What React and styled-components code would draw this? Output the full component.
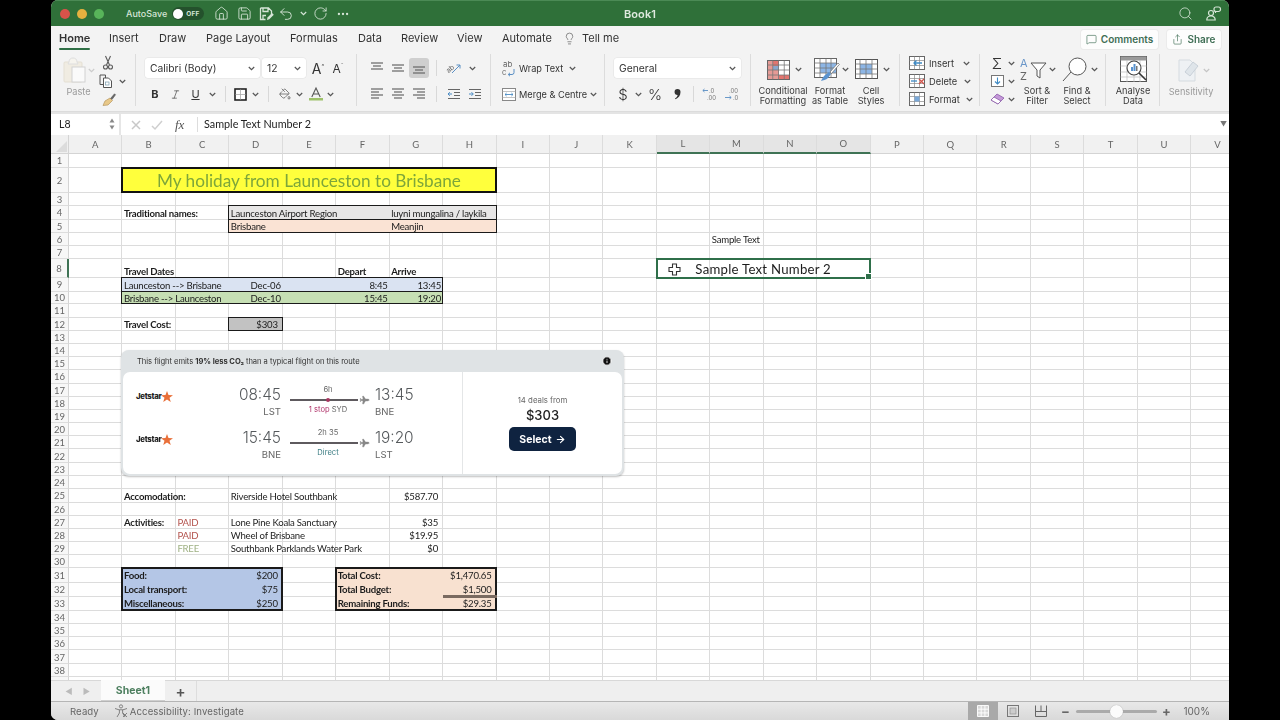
import React from "react";
import styled, { createGlobalStyle, css } from "styled-components";
import { House, Save, Undo2, RotateCw, Ellipsis, Search, Lightbulb, MessageSquare, Share, PaintBucket, Info, Plane, ArrowRight, Italic } from "lucide-react";

const Global = createGlobalStyle`
  html, body { margin: 0; padding: 0; background: #000; }
  body { font-family: "Inter", "Liberation Sans", sans-serif; overflow: hidden; }
  * { box-sizing: border-box; }
`;

const Stage = styled.div`
  width: 1280px; height: 720px; background: #000; display: flex; justify-content: center;
`;
const Window = styled.div`
  width: 1178px; height: 720px; display: flex; flex-direction: column; overflow: hidden;
  background: #f2f2f2; border-radius: 7px 7px 0 7px; filter: blur(0.3px);
`;

/* ---------- title bar ---------- */
const TitleBar = styled.header`
  height: 26px; flex: none; background: #2f7039; color: #e8f0e8;
  display: grid; grid-template-columns: 1fr auto 1fr; align-items: center;
  border-top: 1px solid #4b8a55;
`;
const TitleLeft = styled.div`display: flex; align-items: center; padding-left: 9px;`;
const TitleRight = styled.div`display: flex; align-items: center; justify-content: flex-end; gap: 12px; padding-right: 8px;`;
const Light = styled.span`
  width: 10px; height: 10px; border-radius: 50%; background: ${p => p.$c}; margin-right: 7px;
`;
const AutoSave = styled.span`font-size: 9px; font-weight: 500; color: #d5e4d6; margin-left: 15px; white-space: nowrap;`;
const Toggle = styled.span`
  width: 32px; height: 13px; border-radius: 7px; background: #24512c; margin-left: 5px;
  display: flex; align-items: center; padding-left: 1px; gap: 3px;
  font-size: 6.5px; font-weight: 700; color: #d5e4d6; letter-spacing: .2px;
`;
const Knob = styled.span`width: 10px; height: 10px; border-radius: 50%; background: #fff;`;
const TitleIcon = styled.span`
  display: flex; width: ${p => p.$w || 16}px; justify-content: center; margin-left: ${p => p.$ml || 0}px; color: #d6e5d7;
`;
const TitleText = styled.div`font-size: 11px; font-weight: 600; color: #dfeadf; letter-spacing: .1px;`;

/* ---------- tabs ---------- */
const TabRow = styled.nav`
  height: 26px; flex: none; display: flex; align-items: center; padding: 0 8px 2px; background: #f3f3f3;
`;
const Tab = styled.span`
  position: relative; font-size: 11px; color: #333; white-space: nowrap; width: ${p => p.$w}px; margin-right: ${p => p.$mr}px;
  font-weight: ${p => (p.$active ? 600 : 400)};
  ${p => p.$active && css`
    &::after { content: ""; position: absolute; left: 0; right: 0; bottom: -5px; height: 2px; background: #2f6f45; border-radius: 1px; }
  `}
`;
const TellIcon = styled.span`display: flex; margin-right: 6px; margin-left: -3px; color: #555;`;
const TabActions = styled.div`margin-left: auto; margin-top: 2px; display: flex; gap: 9px;`;
const PillButton = styled.span`
  height: 19px; width: ${p => p.$w}px; background: #fdfdfd; border-radius: 3px; display: flex; align-items: center; justify-content: center;
  gap: 4px; font-size: 10px; font-weight: 600; color: #3f6e55; box-shadow: 0 0 0 1px #ebebeb;
`;

/* ---------- ribbon ---------- */
const Ribbon = styled.section`
  height: 60px; flex: none; display: flex; background: #f3f3f3; border-bottom: 1px solid #dcdcdc; padding-top: 2px;
`;
const Group = styled.div`
  width: ${p => p.$w}px; height: 52px; flex: none; padding-left: ${p => p.$pl || 0}px;
  display: flex; gap: ${p => p.$gap || 0}px;
  border-right: ${p => (p.$last ? "none" : "1px solid #dcdcdc")};
`;
const TwoRows = styled.div`
  display: flex; flex-direction: column; gap: 6px; padding-top: 4px;
`;
const ThreeRows = styled.div`display: flex; flex-direction: column; flex: ${p => (p.$fixed ? "none" : "initial")}; width: ${p => (p.$fixed ? `${p.$fixed}px` : "auto")};`;
const ToolRow = styled.div`display: flex; align-items: center; height: 20px; gap: ${p => p.$gap || 0}px;`;
const ListRow = styled.div`display: flex; align-items: center; height: 18px; gap: ${p => p.$gap || 0}px; font-size: 9.3px; color: #333;`;
const Slot = styled.span`
  display: flex; align-items: center; justify-content: center; height: 20px; flex: none;
  width: ${p => p.$w || 20}px; margin-left: ${p => p.$ml || 0}px; color: #444;
  ${p => p.$active && css`background: #cfcfcf; border-radius: 3px;`}
`;
const ListSlot = styled(Slot)`height: 18px;`;
const Letter = styled.span`font-size: ${p => p.$s || 11}px; font-weight: ${p => p.$wt || 400}; color: #333; text-decoration: ${p => p.$u ? "underline" : "none"};`;
const Caret = styled.sup`font-size: 6px;`;
const ToolSep = styled.span`width: 1px; height: 16px; background: #d8d8d8; margin: 0 ${p => p.$m || 7}px; flex: none;`;
const SelectBox = styled.span`
  width: ${p => p.$w}px; height: 20px; flex: none; background: #fff; border-radius: 3px; box-shadow: 0 0 0 .5px #e2e2e2;
  display: flex; align-items: center; justify-content: space-between; padding: 0 5px; font-size: 10.3px; color: #333;
`;
const WrapLabel = styled.span`font-size: 9.2px; color: #333; white-space: nowrap; margin-left: 2px;`;
const BigButton = styled.div`
  width: ${p => p.$w}px; margin-left: ${p => p.$ml || 0}px; flex: none; display: flex; flex-direction: column; align-items: stretch; color: #333;
`;
const BigIcon = styled.div`
  height: 33px; display: flex; align-items: center; padding-left: ${p => p.$pl || 0}px; padding-bottom: 1px;
  justify-content: ${p => (p.$center ? "center" : "flex-start")};
`;
const BigLabel = styled.div`
  font-size: 9.2px; line-height: 10px; text-align: center; white-space: nowrap; color: ${p => p.$muted ? "#9a9a9a" : "#3a3a3a"};
`;

/* ---------- formula bar ---------- */
const FormulaBar = styled.section`
  height: 23px; flex: none; display: flex; align-items: center; background: #fff; border-top: 2px solid #e4e4e4;
  font-size: 10.2px; color: #222;
`;
const NameBox = styled.div`
  width: 70px; height: 100%; display: flex; align-items: center; justify-content: space-between; padding: 0 3px 1px 8px; border-right: 2px solid #e6e6e6; font-family: "Lato", sans-serif; font-size: 10.5px;
`;
const FormulaIcons = styled.div`display: flex; align-items: center; width: 76px; gap: 9px; padding-left: 9px; height: 100%; color: #bbb;`;
const FxLabel = styled.span`font-family: "Liberation Serif", serif; font-style: italic; font-size: 13px; color: #555; margin-left: 3px;`;
const FormulaSep = styled.span`width: 1px; height: 15px; background: #ddd;`;
const FormulaText = styled.div`flex: 1; padding: 0 0 2px 6px; font-family: "Lato", sans-serif; font-size: 10.8px; color: #222;`;
const FormulaCaret = styled.span`padding-right: 2px; color: #777; font-size: 7px;`;

/* ---------- sheet ---------- */
const rowHeights = [19, 13.5, 25.5, 13.3, 13.4, 13, 13, 13, 19.6, 13.4, 12.6, 13.4, 13.3, 13,
  13.2, 13.2, 13.2, 13.2, 13.2, 13.2, 13.2, 13.2, 13.2, 13.2, 13.3,
  13.4, 13.3, 13, 13, 13, 13.3, 14.4, 14, 14, 13.3, 13, 13.7, 13.3, 13.3, 13];
const colLetters = "ABCDEFGHIJKLMNOPQRSTUV".split("");
const sheetGrid = css`
  display: grid;
  grid-template-columns: 18px repeat(22, 53.45px);
  grid-template-rows: ${rowHeights.map(h => `${h}px`).join(" ")};
`;
const Sheet = styled.section`
  position: relative; flex: none; height: 545px; overflow: hidden; background: #fff;
`;
const BaseGrid = styled.div`${sheetGrid}`;
const OverlayGrid = styled.div`${sheetGrid} position: absolute; left: 0; top: 0;`;
const Corner = styled.div`
  background: #f0f0f0; border-right: 1px solid #d4d4d4; border-bottom: 1px solid #d4d4d4; position: relative;
  &::after { content: ""; position: absolute; right: 1px; bottom: 1px; border-style: solid; border-width: 0 0 11px 11px; border-color: transparent transparent #dcdcdc transparent; }
`;
const ColHead = styled.div`
  display: flex; align-items: center; justify-content: center; font-family: "Lato", sans-serif; font-size: 9.5px; color: #666;
  background: ${p => (p.$sel ? "#e5e5e5" : "#f1f1f1")}; border-right: 1px solid #dcdcdc;
  border-bottom: ${p => (p.$sel ? "2px solid #3f7355" : "1px solid #d4d4d4")};
`;
const RowHead = styled.div`
  display: flex; align-items: center; justify-content: center; font-family: "Lato", sans-serif; font-size: 9.5px; color: #666; padding-top: 1px;
  background: #f7f7f7; border-bottom: 1px solid #dcdcdc;
  border-right: ${p => (p.$sel ? "2px solid #3f7355" : "1px solid #d4d4d4")};
`;
const GridCell = styled.div`border-right: 1px solid #dcdcdc; border-bottom: 1px solid #dcdcdc;`;

const placed = css`
  grid-row: ${p => p.$r + 1} / span ${p => p.$rs || 1};
  grid-column: ${p => p.$c + 1} / span ${p => p.$cs || 1};
`;
const Fill = styled.div`
  ${placed} background: ${p => p.$bg}; border: ${p => p.$b || 1}px solid #1a1a1a; margin: -1px 0 0 -1px;
`;
const TitleCell = styled.div`
  ${placed} background: #ffff3c; border: 2px solid #111; margin: -1px 0 0 -1px; display: flex; align-items: center; justify-content: center;
  font-family: "Lato", sans-serif; font-size: 17.2px; color: #7da63a; padding-top: 1px;
`;
const Label = styled.div`
  ${placed} display: flex; align-items: ${p => (p.$bottom ? "flex-end" : "center")};
  justify-content: ${p => (p.$right ? "flex-end" : "flex-start")};
  padding: ${p => (p.$bottom ? 0 : 1)}px ${p => p.$pr || 2}px ${p => (p.$bottom ? 2 : 0)}px 1.5px;
  font-family: "Lato", sans-serif; font-size: 9.6px; white-space: nowrap; line-height: 1;
  letter-spacing: -.22px;
  font-weight: ${p => (p.$bold ? 700 : 400)}; color: ${p => p.$color || "#1c1c1c"};
`;
const Underbar = styled.div`${placed} align-self: end; height: 3px; margin-bottom: -1px; background: #7a6a60;`;
const Selection = styled.div`
  ${placed} position: relative; border: 2px solid #2f6f4a; margin: -1px 0 -1px -1px; display: flex; align-items: center; justify-content: center;
  font-family: "Lato", sans-serif; font-size: 13.2px; color: #1c1c1c; letter-spacing: .25px; padding-top: 1px;
  &::after { content: ""; position: absolute; right: -3px; bottom: -3px; width: 5px; height: 5px; background: #2f6f4a; border: 1px solid #fff; }
`;
const CursorMark = styled.svg`position: absolute; left: 617px; top: 128px;`;

/* ---------- flight card ---------- */
const Card = styled.article`
  position: absolute; left: 70px; top: 215px; width: 503px; height: 126px; background: #dfe3e5; border-radius: 8px; padding: 0 2px 2px;
  display: flex; flex-direction: column; box-shadow: 0 1px 2px rgba(0,0,0,.25);
`;
const CardNote = styled.div`
  height: 22px; flex: none; display: flex; align-items: center; justify-content: space-between; padding: 0 10px 0 14px;
  font-size: 7.6px; color: #333; letter-spacing: -.05px;
`;
const CardBody = styled.div`flex: 1; background: #fff; border-radius: 7px; display: grid; grid-template-columns: 340px 1fr;`;
const Flights = styled.div`display: flex; flex-direction: column; padding-top: 14px; border-right: 1px solid #e4e6e7;`;
const FlightRow = styled.div`height: 43px; display: flex; align-items: flex-start; padding-left: 13px;`;
const Brand = styled.div`
  width: 59px; display: flex; align-items: center; height: 20px; font-size: 7.8px; font-weight: 800; color: #222; letter-spacing: -.3px;
`;
const TimeBox = styled.div`
  width: ${p => p.$w}px; margin-left: ${p => p.$ml || 0}px; text-align: ${p => p.$align}; display: flex; flex-direction: column; gap: 3px;
`;
const Clock = styled.div`font-size: 15.4px; line-height: 17px; color: #55595c; font-weight: 300;`;
const Airport = styled.div`font-size: 9.6px; line-height: 12px; color: #666;`;
const Route = styled.div`
  width: 78px; margin: -1px 0 0 9px; display: flex; flex-direction: column; align-items: flex-start;
`;
const RouteTop = styled.div`width: 76px; height: 11px; text-align: center; font-size: 7.6px; line-height: 10px; color: #666;`;
const RouteLine = styled.div`display: flex; align-items: center; height: 8px;`;
const Track = styled.div`
  width: 68px; height: 1.6px; background: #5e5a5e; position: relative;
  ${p => p.$stop && css`&::after { content: ""; position: absolute; left: 36px; top: -1.2px; width: 4px; height: 4px; border-radius: 50%; background: #a6365f; }`}
`;
const RouteBottom = styled.div`width: 76px; text-align: center; font-size: 7.6px; line-height: 12px; color: ${p => p.$c || "#666"};`;
const Stop = styled.span`color: #b0336a;`;
const Deals = styled.div`display: flex; flex-direction: column; align-items: center; padding-top: 23px;`;
const DealsNote = styled.div`font-size: 7.8px; line-height: 10px; color: #666;`;
const Price = styled.div`font-size: 13px; line-height: 16px; margin-top: 2px; color: #222; font-weight: 500;`;
const SelectButton = styled.div`
  width: 67px; height: 24px; margin-top: 4px; background: #0f2340; border-radius: 5px; color: #fff; font-size: 10.5px; font-weight: 700;
  display: flex; align-items: center; justify-content: center; gap: 3px;
`;

/* ---------- bottom ---------- */
const SheetTabs = styled.section`
  height: 21px; flex: none; display: flex; align-items: stretch; background: #efefef; border-top: 1px solid #d8d8d8; padding-left: 11px; color: #aaa;
`;
const NavArrow = styled.span`display: flex; align-items: center; justify-content: center; width: ${p => p.$w}px; color: #bbb; font-size: 8px;`;
const SheetTab = styled.span`
  width: 64px; margin-left: 4px; margin-top: -1px; background: #fbfbfb; border-bottom: 1px solid #cfcfcf; display: flex; align-items: center; justify-content: center; font-size: 10.5px; font-weight: 700; color: #4d7f5f;
`;
const AddSheet = styled.span`
  width: 32px; display: flex; align-items: center; justify-content: center; font-size: 15px; font-weight: 600; color: #555; border-right: 1px solid #ddd;
`;
const StatusBar = styled.footer`
  flex: 1; display: flex; align-items: center; background: linear-gradient(#e8e8e8, #d9d9d9); border-top: 1px solid #b5b5b5; font-size: 9.6px; color: #666; padding-left: 19px;
`;
const StatusText = styled.span`margin-left: ${p => p.$ml || 0}px; white-space: nowrap; letter-spacing: .08px;`;
const StatusGroup = styled(StatusText)`display: flex; align-items: center; gap: 2px;`;
const StatusRight = styled.div`margin-left: auto; display: flex; align-items: center; height: 100%; padding-right: 19px;`;
const ViewButton = styled.span`
  width: ${p => p.$w}px; height: 100%; display: flex; align-items: center; justify-content: center;
  background: ${p => (p.$active ? "#a9a9a9" : "transparent")}; color: #666;
`;
const ZoomMark = styled.span`width: 10px; margin-left: ${p => p.$ml || 0}px; text-align: center; font-size: 13px; font-weight: 700; color: #666; line-height: 1;`;
const Slider = styled.span`width: 81px; height: 3px; background: #aaa; border-radius: 2px; margin-left: 6px; position: relative;`;
const SliderKnob = styled.span`position: absolute; left: 34px; top: -5px; width: 13px; height: 13px; border-radius: 50%; background: #fbfbfb; box-shadow: 0 0 1px #999;`;
const ZoomValue = styled.span`margin-left: 12px; font-size: 10px; color: #666;`;

/* ---------- icons ---------- */
const Chev = ({ c = "#555" }) => (
  <svg width="7" height="5" viewBox="0 0 7 5"><path d="M.8 1l2.7 2.7L6.2 1" fill="none" stroke={c} strokeWidth="1.2" /></svg>
);
const Ico = ({ w = 16, h = 16, children }) => (
  <svg width={w} height={h} viewBox={`0 0 ${w} ${h}`} style={{ display: "block", overflow: "visible" }}>{children}</svg>
);
const SaveEdit = () => (
  <Ico w={16} h={16}>
    <path d="M2.5 2h8l3 3v4M2.5 2v11.5h5M5 2v3.5h5V2M5 13v-3.5h3" fill="none" stroke="#d6e5d7" strokeWidth="1.3" />
    <path d="M9 14l.5-2.5 4.5-4.5 1.8 1.8-4.5 4.5z" fill="#d6e5d7" />
  </Ico>
);
const People = () => (
  <Ico w={17} h={17}>
    <g fill="none" stroke="#d6e5d7" strokeWidth="1.2">
      <circle cx="6" cy="8" r="2.5" /><path d="M1.8 15c0-2.8 1.8-4 4.2-4s4.2 1.2 4.2 4z" />
      <rect x="9" y="2" width="6.5" height="4.5" rx="2" /><path d="M10.5 6.5V8" />
    </g>
  </Ico>
);
const Paste = () => (
  <Ico w={23} h={26}>
    <rect x="1" y="5" width="18" height="20" rx="1" fill="#f0ece2" stroke="#e4dfd3" />
    <path d="M6 5c0-3 2-4 4-4s4 1 4 4l1 2H5z" fill="#f6f4ee" stroke="#dedede" />
    <rect x="9" y="10" width="13" height="15" fill="#fafafa" stroke="#d2d2d2" />
  </Ico>
);
const Cut = () => (
  <Ico w={10} h={14}>
    <g fill="none" stroke="#5a5a5a" strokeWidth="1.1">
      <path d="M2.5 0l4 9M7.5 0l-4 9" /><circle cx="2.5" cy="11" r="2" /><circle cx="7.5" cy="11" r="2" />
    </g>
  </Ico>
);
const CopyDocs = () => (
  <Ico w={13} h={14}>
    <path d="M1 1h5.5v3M1 1v9.5h3.5" fill="none" stroke="#555" strokeWidth="1" />
    <path d="M4.5 4h5l3 3v6.5h-8z" fill="#fff" stroke="#555" strokeWidth="1" /><rect x="6.5" y="8" width="3.5" height="3" fill="none" stroke="#79a" strokeWidth=".7" />
  </Ico>
);
const Brush = () => (
  <Ico w={14} h={13}>
    <path d="M8 5l2.5 2.5L6 12 1 12.5 3 8z" fill="#e8c888" stroke="#b69660" strokeWidth=".7" />
    <path d="M8.5 5.5L12.5.8l1 1L10 6.5" fill="#666" stroke="#555" strokeWidth=".6" />
  </Ico>
);
const Borders = () => (
  <Ico w={13} h={13}>
    <rect x="1" y="1" width="11" height="11" fill="#fff" stroke="#222" strokeWidth="1.6" />
    <path d="M6.5 1.5v10M1.5 6.5h10" stroke="#aaa" strokeWidth=".8" />
  </Ico>
);
const FontColor = () => (
  <Ico w={14} h={14}>
    <path d="M2.8 10L7 1l4.2 9M4.5 7h5" fill="none" stroke="#555" strokeWidth="1.1" />
    <rect x="0" y="11" width="14" height="2.5" fill="#9dc16a" />
  </Ico>
);
const Lines = ({ rows }) => (
  <Ico w={14} h={14}>
    {rows.map(([y, x1, x2], i) => (
      <path key={i} d={`M${x1} ${y}H${x2}`} stroke="#666" strokeWidth="1.2" />
    ))}
  </Ico>
);
const Orient = () => (
  <Ico w={14} h={13}>
    <text x="0" y="9" fontSize="7" fill="#666" transform="rotate(-40 4 8)" fontFamily="Inter">ab</text>
    <path d="M5 11L13 3M13 3H9.5M13 3v3.5" fill="none" stroke="#5a8fc4" strokeWidth="1" />
  </Ico>
);
const Indent = ({ flip }) => (
  <Ico w={14} h={12}>
    <path d="M1 1.5h12M1 10.5h12M7 4.5h6M7 7.5h6" stroke="#666" strokeWidth="1" />
    <path d={flip ? "M1 6h4M3.5 4.2L5.3 6 3.5 7.8" : "M5 6H1M2.8 4.2L1 6l1.8 1.8"} fill="none" stroke="#4a8bc4" strokeWidth="1" />
  </Ico>
);
const WrapIcon = () => (
  <Ico w={14} h={16}>
    <text x="1" y="7" fontSize="8" fill="#666" fontFamily="Inter">ab</text>
    <text x="0" y="15" fontSize="7.5" fill="#666" fontFamily="Inter">c</text>
    <path d="M12 9v3.5q0 2-2 2H6.5M8 12.8l-1.8 1.7 1.8 1.7" fill="none" stroke="#5a8fc4" strokeWidth="1" />
  </Ico>
);
const MergeIcon = () => (
  <Ico w={14} h={13}>
    <rect x=".5" y=".5" width="13" height="12" fill="#fff" stroke="#888" />
    <path d="M.5 3.5h13M.5 9.5h13" stroke="#aaa" strokeWidth=".7" />
    <path d="M3 6.5h8M4.6 5L3 6.5 4.6 8M9.4 5L11 6.5 9.4 8" fill="none" stroke="#4a8bc4" strokeWidth=".9" />
  </Ico>
);
const CommaIcon = () => (
  <Ico w={9} h={12}>
    <path d="M4.5 1a3 3 0 0 1 3 3c0 3.5-2 6-5 7.2l-.5-.8c1.5-.8 2.4-2 2.6-3.4A2.9 2.9 0 0 1 4.5 1z" fill="#333" />
  </Ico>
);
const DecIcon = ({ rev }) => (
  <Ico w={16} h={14}>
    <text x={rev ? 5 : 7} y="6" fontSize="6" fill="#777" fontFamily="Inter">{rev ? ".00" : ".0"}</text>
    <text x={rev ? 9 : 5} y="13" fontSize="6" fill="#777" fontFamily="Inter">{rev ? ".0" : ".00"}</text>
    <path d={rev ? "M1 10.5h6M5.5 9L7.2 10.5 5.5 12" : "M6 3.5H1M2.5 2L.8 3.5 2.5 5"} fill="none" stroke="#5a8fc4" strokeWidth=".9" />
  </Ico>
);
const TableBase = ({ w, h, children }) => (
  <Ico w={w} h={h}>
    <rect x=".5" y=".5" width={w - 1} height={h - 1} fill="#fff" stroke="#666" />
    {children}
    <g stroke="#777" strokeWidth=".8">
      {[1, 2, 3].map(i => <path key={i} d={`M${(i * w) / 4} .5V${h - .5}`} />)}
      {[1, 2, 3].map(i => <path key={i} d={`M.5 ${(i * h) / 4}H${w - .5}`} />)}
    </g>
  </Ico>
);
const CondFormat = () => (
  <TableBase w={23} h={20}>
    <rect x="1" y="1" width="5" height="9" fill="#e59a95" /><rect x="6" y="1" width="6" height="5" fill="#e2756f" />
    <rect x="6" y="6" width="6" height="4" fill="#8aa7cc" /><rect x="1" y="10" width="11" height="9" fill="#e59a95" />
    <rect x="12" y="15" width="10" height="4" fill="#e2756f" />
  </TableBase>
);
const FormatTable = () => (
  <Ico w={26} h={24}>
    <rect x=".5" y=".5" width="22" height="19" fill="#fff" stroke="#666" />
    <rect x="6" y="5" width="16" height="10" fill="#8db6e6" />
    <path d="M.5 5h22M.5 10h22M.5 15h22M6 .5v19M12 .5v19M17 .5v19" stroke="#777" strokeWidth=".8" />
    <path d="M11 17l4-3 2 2-3 4c-2 2-5 2-7 3 1-2 2-4 4-6z" fill="#5a93cf" />
    <path d="M16 14l8-9 1.4 1.4-8 9.2z" fill="#fff" stroke="#666" strokeWidth=".7" />
  </Ico>
);
const CellStyles = () => (
  <Ico w={23} h={22}>
    <rect x=".5" y=".5" width="22" height="19" fill="#fff" stroke="#555" />
    <rect x="5" y="5" width="12" height="10" fill="#8db6e6" />
    <path d="M.5 5h22M.5 10h22M.5 15h22M5 .5v19M11 .5v19M17 .5v19" stroke="#777" strokeWidth=".8" />
  </Ico>
);
const SmallTable = ({ kind }) => (
  <Ico w={16} h={14}>
    <rect x=".5" y=".5" width="15" height="13" fill="#fff" stroke="#666" />
    <path d="M.5 4.5h15M.5 9.5h15M5.5.5v13M10.5.5v13" stroke="#888" strokeWidth=".7" />
    {kind === "ins" && <path d="M13 7H5M7.5 4.5L5 7l2.5 2.5" fill="none" stroke="#3f8ac4" strokeWidth="1.3" />}
    {kind === "del" && <path d="M10 5l5 5M15 5l-5 5" stroke="#d0554c" strokeWidth="1.3" />}
    {kind === "del" && <path d="M2 7h6" stroke="#3f8ac4" strokeWidth="1.3" />}
    {kind === "fmt" && <rect x="5.5" y="4.5" width="5" height="5" fill="#7aa8d8" />}
  </Ico>
);
const FillDown = () => (
  <Ico w={13} h={12}>
    <rect x=".5" y=".5" width="12" height="11" fill="#fff" stroke="#777" />
    <path d="M6.5 2.5v6M4 6.5l2.5 2.5L9 6.5" fill="none" stroke="#3f8ac4" strokeWidth="1.1" />
  </Ico>
);
const Eraser = () => (
  <Ico w={15} h={12}>
    <path d="M1 7l6-6 7 4-6 6z" fill="#c498d8" stroke="#8a5aa8" strokeWidth=".8" />
    <path d="M1 7l3-3 7 4-3 3z" fill="#fff" stroke="#8a5aa8" strokeWidth=".8" />
  </Ico>
);
const SortFilter = () => (
  <Ico w={28} h={25}>
    <text x="0" y="10" fontSize="11" fill="#6a96c8" fontFamily="Inter">A</text>
    <text x="0" y="23" fontSize="11" fill="#666" fontFamily="Inter">Z</text>
    <path d="M11 6h15l-6 7v8l-3-2v-6z" fill="#fff" stroke="#555" strokeWidth="1" />
  </Ico>
);
const FindIcon = () => (
  <Ico w={25} h={25}>
    <circle cx="15.5" cy="9.5" r="8.5" fill="#fff" stroke="#555" strokeWidth="1" />
    <path d="M9 15L1 24" stroke="#555" strokeWidth="1" />
  </Ico>
);
const Analyse = () => (
  <Ico w={27} h={27}>
    <rect x=".5" y=".5" width="26" height="25" fill="#fff" stroke="#555" />
    <rect x=".5" y=".5" width="26" height="4" fill="#9a9a9a" />
    <path d="M.5 10h26M.5 16h26M.5 21h26M7 4v22M14 4v22M20 4v22" stroke="#bbb" strokeWidth=".7" />
    <circle cx="14" cy="12" r="7" fill="#fff" stroke="#444" strokeWidth="1.1" />
    <rect x="11" y="11" width="2" height="4" fill="#5a93cf" /><rect x="13.5" y="8" width="2" height="7" fill="#5a93cf" /><rect x="16" y="10" width="1.5" height="5" fill="#777" />
    <path d="M19 17l7 7" stroke="#333" strokeWidth="1.6" />
  </Ico>
);
const SensitivityIcon = () => (
  <Ico w={22} h={23}>
    <path d="M1 1h11l5 5v16H1z" fill="#eef1f4" stroke="#d5dbe0" />
    <path d="M7 13l8-10 5 4-8 10z" fill="#dfe5ea" stroke="#c8d0d8" />
  </Ico>
);
const Jet = () => (
  <svg width="12" height="11" viewBox="0 0 24 22">
    <path d="M12 0l3 8 9 .3-7 5.3 2.5 8.4L12 17l-7.5 5L7 13.6 0 8.3 9 8z" fill="#e9703a" />
  </svg>
);
const Accessibility = () => (
  <Ico w={14} h={14}>
    <g fill="none" stroke="#777" strokeWidth=".9">
      <circle cx="7" cy="2.4" r="1.6" /><path d="M1 4.5l4 1.3h4l4-1.3M5.4 6v3L3 13M8.6 6v3L11 13" />
      <path d="M9 9l4 4M13 9l-4 4" />
    </g>
  </Ico>
);
const GridView = () => (
  <Ico w={12} h={12}><path d="M.5.5h11v11H.5zM4.2.5v11M7.9.5v11M.5 4.2h11M.5 7.9h11" fill="#d8d8d8" stroke="#fff" strokeWidth=".9" /></Ico>
);
const PageView = () => (
  <Ico w={12} h={12}><rect x=".5" y=".5" width="11" height="11" fill="none" stroke="#777" /><rect x="3" y="3" width="6" height="6" fill="#ccc" stroke="#888" strokeWidth=".6" /></Ico>
);
const BreakView = () => (
  <Ico w={12} h={12}><path d="M.5.5v11h11V.5M6 .5v6M.5 6.5h11" fill="none" stroke="#666" /></Ico>
);
const PlaneSlot = styled.span`display: flex; margin-left: 1px; transform: rotate(45deg);`;
const PlaneMark = () => <PlaneSlot><Plane size={10} color="#888" fill="#888" strokeWidth={1} /></PlaneSlot>;

/* ---------- data ---------- */
const col = l => colLetters.indexOf(l) + 1;
const tabs = [
  ["Home", 31, 19, true], ["Insert", 30, 20], ["Draw", 26, 21], ["Page Layout", 62, 22], ["Formulas", 46, 22],
  ["Data", 23, 20], ["Review", 35, 21], ["View", 24, 21], ["Automate", 49, 15],
];
const fills = [
  [4, "D", 1, 5, "#e7e6e6"], [5, "D", 1, 5, "#fae3d4"],
  [9, "B", 1, 6, "#dae3f2"], [10, "B", 1, 6, "#c6dfb4"],
  [12, "D", 1, 1, "#c2c2c2"],
];
const cells = [
  [4, "B", "Traditional names:", { $bold: true }], [4, "D", "Launceston Airport Region"], [4, "G", "luyni mungalina / laykila"],
  [5, "D", "Brisbane"], [5, "G", "Meanjin"], [6, "M", "Sample Text"],
  [8, "B", "Travel Dates", { $bold: true, $bottom: true }], [8, "F", "Depart", { $bold: true, $bottom: true }], [8, "G", "Arrive", { $bold: true, $bottom: true }],
  [9, "B", "Launceston --> Brisbane"], [9, "D", "Dec-06", { $right: true }], [9, "F", "8:45", { $right: true }], [9, "G", "13:45", { $right: true }],
  [10, "B", "Brisbane --> Launceston"], [10, "D", "Dec-10", { $right: true }], [10, "F", "15:45", { $right: true }], [10, "G", "19:20", { $right: true }],
  [12, "B", "Travel Cost:", { $bold: true }], [12, "D", "$303", { $right: true, $pr: 5 }],
  [25, "B", "Accomodation:", { $bold: true }], [25, "D", "Riverside Hotel Southbank"], [25, "G", "$587.70", { $right: true, $pr: 5 }],
  [27, "B", "Activities:", { $bold: true }], [27, "C", "PAID", { $color: "#b4544e" }], [27, "D", "Lone Pine Koala Sanctuary"], [27, "G", "$35", { $right: true, $pr: 5 }],
  [28, "C", "PAID", { $color: "#b4544e" }], [28, "D", "Wheel of Brisbane"], [28, "G", "$19.95", { $right: true, $pr: 5 }],
  [29, "C", "FREE", { $color: "#9fb184" }], [29, "D", "Southbank Parklands Water Park"], [29, "G", "$0", { $right: true, $pr: 5 }],
  [31, "B", "Food:", { $bold: true }], [31, "D", "$200", { $right: true, $pr: 5 }],
  [32, "B", "Local transport:", { $bold: true }], [32, "D", "$75", { $right: true, $pr: 5 }],
  [33, "B", "Miscellaneous:", { $bold: true }], [33, "D", "$250", { $right: true, $pr: 5 }],
  [31, "F", "Total Cost:", { $bold: true }], [31, "H", "$1,470.65", { $right: true, $pr: 5 }],
  [32, "F", "Total Budget:", { $bold: true }], [32, "H", "$1,500", { $right: true, $pr: 5 }],
  [33, "F", "Remaining Funds:", { $bold: true }], [33, "H", "$29.35", { $right: true, $pr: 5 }],
];
const flights = [
  { dep: "08:45", from: "LST", top: "6h", arr: "13:45", to: "BNE", stop: true },
  { dep: "15:45", from: "BNE", top: "2h 35", arr: "19:20", to: "LST", stop: false },
];
const rowCount = rowHeights.length - 1;
const selectedCols = ["L", "M", "N", "O"];

export default function App() {
  return (
    <Stage>
      <Global />
      <Window>
        <TitleBar>
          <TitleLeft>
            <Light $c="#d9534a" /><Light $c="#e5b13f" /><Light $c="#58b45a" />
            <AutoSave>AutoSave</AutoSave>
            <Toggle><Knob />OFF</Toggle>
            <TitleIcon $ml={9}><House size={15} strokeWidth={1.4} /></TitleIcon>
            <TitleIcon $ml={7}><Save size={15} strokeWidth={1.4} /></TitleIcon>
            <TitleIcon $ml={6}><SaveEdit /></TitleIcon>
            <TitleIcon $ml={4}><Undo2 size={16} strokeWidth={1.4} /></TitleIcon>
            <TitleIcon $ml={4} $w={10}><Chev c="#d6e5d7" /></TitleIcon>
            <TitleIcon $ml={4}><RotateCw size={15} strokeWidth={1.4} /></TitleIcon>
            <TitleIcon $ml={7}><Ellipsis size={14} /></TitleIcon>
          </TitleLeft>
          <TitleText>Book1</TitleText>
          <TitleRight>
            <TitleIcon><Search size={15} strokeWidth={1.3} /></TitleIcon>
            <TitleIcon><People /></TitleIcon>
          </TitleRight>
        </TitleBar>

        <TabRow>
          {tabs.map(([t, w, mr, a]) => <Tab key={t} $w={w} $mr={mr} $active={a}>{t}</Tab>)}
          <TellIcon><Lightbulb size={13} strokeWidth={1.2} /></TellIcon>
          <Tab $w={36} $mr={0}>Tell me</Tab>
          <TabActions>
            <PillButton $w={77}><MessageSquare size={11} strokeWidth={1.4} />Comments</PillButton>
            <PillButton $w={54}><Share size={11} strokeWidth={1.4} />Share</PillButton>
          </TabActions>
        </TabRow>

        <Ribbon>
          <Group $w={85} $pl={9} $gap={3}>
            <BigButton $w={37}>
              <BigIcon $pl={3}><Paste /><Slot $w={10}><Chev c="#ccc" /></Slot></BigIcon>
              <BigLabel $muted>Paste</BigLabel>
            </BigButton>
            <ThreeRows>
              <ListRow><ListSlot $w={16}><Cut /></ListSlot></ListRow>
              <ListRow><ListSlot $w={11}><CopyDocs /></ListSlot><ListSlot $w={12} $ml={5}><Chev /></ListSlot></ListRow>
              <ListRow><ListSlot $w={18}><Brush /></ListSlot></ListRow>
            </ThreeRows>
          </Group>

          <Group $w={221} $pl={9}>
            <TwoRows>
              <ToolRow $gap={2}>
                <SelectBox $w={115}>Calibri (Body)<Chev /></SelectBox>
                <SelectBox $w={44}>12<Chev /></SelectBox>
                <Slot><Letter $s={14}>A<Caret>^</Caret></Letter></Slot>
                <Slot $ml={-2}><Letter $s={12}>A<Caret>ˇ</Caret></Letter></Slot>
              </ToolRow>
              <ToolRow>
                <Slot><Letter $wt={700}>B</Letter></Slot>
                <Slot><Italic size={11} strokeWidth={1.5} /></Slot>
                <Slot $w={21}><Letter $u>U</Letter></Slot>
                <Slot $w={12}><Chev /></Slot>
                <ToolSep />
                <Slot $w={15}><Borders /></Slot>
                <Slot $w={12} $ml={1}><Chev /></Slot>
                <ToolSep />
                <Slot $w={14} $ml={2}><PaintBucket size={12} strokeWidth={1.3} /></Slot>
                <Slot $w={12} $ml={1}><Chev /></Slot>
                <Slot $w={14} $ml={4}><FontColor /></Slot>
                <Slot $w={12} $ml={1}><Chev /></Slot>
              </ToolRow>
            </TwoRows>
          </Group>

          <Group $w={134} $pl={10}>
            <TwoRows>
              <ToolRow>
                <Slot><Lines rows={[[2, 1, 13], [5, 3, 11], [8, 1, 13]]} /></Slot>
                <Slot $ml={1}><Lines rows={[[4, 1, 13], [7, 3, 11], [10, 1, 13]]} /></Slot>
                <Slot $ml={1} $active><Lines rows={[[6, 1, 13], [9, 3, 11], [12, 1, 13]]} /></Slot>
                <ToolSep $m={7} />
                <Slot><Orient /></Slot>
                <Slot $w={12} $ml={2}><Chev /></Slot>
              </ToolRow>
              <ToolRow>
                <Slot><Lines rows={[[2, 1, 13], [5, 1, 9], [8, 1, 13], [11, 1, 9]]} /></Slot>
                <Slot $ml={1}><Lines rows={[[2, 1, 13], [5, 3, 11], [8, 1, 13], [11, 3, 11]]} /></Slot>
                <Slot $ml={1}><Lines rows={[[2, 1, 13], [5, 5, 13], [8, 1, 13], [11, 5, 13]]} /></Slot>
                <ToolSep $m={7} />
                <Slot><Indent /></Slot>
                <Slot $ml={1}><Indent flip /></Slot>
              </ToolRow>
            </TwoRows>
          </Group>

          <Group $w={114} $pl={10}>
            <TwoRows>
              <ToolRow>
                <Slot $w={16}><WrapIcon /></Slot><WrapLabel>Wrap Text</WrapLabel><Slot $w={12} $ml={3}><Chev /></Slot>
              </ToolRow>
              <ToolRow>
                <Slot $w={16}><MergeIcon /></Slot><WrapLabel>Merge &amp; Centre</WrapLabel><Slot $w={12}><Chev /></Slot>
              </ToolRow>
            </TwoRows>
          </Group>

          <Group $w={146} $pl={9}>
            <TwoRows>
              <ToolRow><SelectBox $w={127}>General<Chev /></SelectBox></ToolRow>
              <ToolRow>
                <Slot $w={18}><Letter $s={15} $wt={300}>$</Letter></Slot>
                <Slot $w={12}><Chev /></Slot>
                <Slot $ml={1}><Letter $s={15} $wt={300}>%</Letter></Slot>
                <Slot $ml={2}><CommaIcon /></Slot>
                <ToolSep $m={6} />
                <Slot><DecIcon /></Slot>
                <Slot $ml={2}><DecIcon rev /></Slot>
              </ToolRow>
            </TwoRows>
          </Group>

          <Group $w={149} $pl={4}>
            <BigButton $w={56}>
              <BigIcon $pl={12}><CondFormat /><Slot $w={12} $ml={2}><Chev /></Slot></BigIcon>
              <BigLabel>Conditional<br />Formatting</BigLabel>
            </BigButton>
            <BigButton $w={38}>
              <BigIcon $pl={3}><FormatTable /><Slot $w={12} $ml={-1}><Chev /></Slot></BigIcon>
              <BigLabel>Format<br />as Table</BigLabel>
            </BigButton>
            <BigButton $w={38} $ml={3}>
              <BigIcon $pl={3}><CellStyles /><Slot $w={12} $ml={2}><Chev /></Slot></BigIcon>
              <BigLabel>Cell<br />Styles</BigLabel>
            </BigButton>
          </Group>

          <Group $w={80} $pl={9}>
            <ThreeRows>
              <ListRow $gap={4}><SmallTable kind="ins" />Insert<Slot $w={12} $ml={2}><Chev /></Slot></ListRow>
              <ListRow $gap={4}><SmallTable kind="del" />Delete<Slot $w={12}><Chev /></Slot></ListRow>
              <ListRow $gap={4}><SmallTable kind="fmt" />Format<Slot $w={12}><Chev /></Slot></ListRow>
            </ThreeRows>
          </Group>

          <Group $w={126} $pl={9}>
            <ThreeRows $fixed={28}>
              <ListRow><ListSlot $w={16}><Letter $s={15} $wt={300}>Σ</Letter></ListSlot><ListSlot $w={12}><Chev /></ListSlot></ListRow>
              <ListRow><ListSlot $w={16}><FillDown /></ListSlot><ListSlot $w={12}><Chev /></ListSlot></ListRow>
              <ListRow><ListSlot $w={16}><Eraser /></ListSlot><ListSlot $w={12}><Chev /></ListSlot></ListRow>
            </ThreeRows>
            <BigButton $w={40}>
              <BigIcon $pl={3}><SortFilter /><Slot $w={8}><Chev /></Slot></BigIcon>
              <BigLabel>Sort &amp;<br />Filter</BigLabel>
            </BigButton>
            <BigButton $w={40}>
              <BigIcon $pl={5}><FindIcon /><Slot $w={12} $ml={1}><Chev /></Slot></BigIcon>
              <BigLabel>Find &amp;<br />Select</BigLabel>
            </BigButton>
          </Group>

          <Group $w={54}>
            <BigButton $w={54}>
              <BigIcon $center><Analyse /></BigIcon>
              <BigLabel>Analyse<br />Data</BigLabel>
            </BigButton>
          </Group>

          <Group $w={69} $last>
            <BigButton $w={62}>
              <BigIcon $pl={18}><SensitivityIcon /><Slot $w={12}><Chev c="#c4c4c4" /></Slot></BigIcon>
              <BigLabel $muted>Sensitivity</BigLabel>
            </BigButton>
          </Group>
        </Ribbon>

        <FormulaBar>
          <NameBox>L8<Ico w={8} h={14}><path d="M1.5 5.5L4 1.5l2.5 4zM1.5 8.5L4 12.5l2.5-4z" fill="#888" /></Ico></NameBox>
          <FormulaIcons>
            <Ico w={12} h={12}><path d="M2 2l8 8M10 2l-8 8" stroke="#c8c8c8" strokeWidth="1.5" /></Ico>
            <Ico w={12} h={12}><path d="M1 7l3 3 7-8" fill="none" stroke="#cfcfcf" strokeWidth="1.5" /></Ico>
            <FxLabel>fx</FxLabel>
          </FormulaIcons>
          <FormulaSep />
          <FormulaText>Sample Text Number 2</FormulaText>
          <FormulaCaret>▼</FormulaCaret>
        </FormulaBar>

        <Sheet>
          <BaseGrid>
            <Corner />
            {colLetters.map(l => <ColHead key={l} $sel={selectedCols.includes(l)}>{l}</ColHead>)}
            {Array.from({ length: rowCount }, (_, i) => (
              <React.Fragment key={i}>
                <RowHead $sel={i === 7}>{i < 38 ? i + 1 : ""}</RowHead>
                {colLetters.map(l => <GridCell key={l} />)}
              </React.Fragment>
            ))}
          </BaseGrid>
          <OverlayGrid>
            <TitleCell $r={2} $c={col("B")} $cs={7}>My holiday from Launceston to Brisbane</TitleCell>
            {fills.map(([r, c, rs, cs, bg]) => <Fill key={`${r}${c}`} $r={r} $rs={rs} $c={col(c)} $cs={cs} $bg={bg} />)}
            <Fill $r={31} $rs={3} $c={col("B")} $cs={3} $bg="#b4c6e6" $b={2} />
            <Fill $r={31} $rs={3} $c={col("F")} $cs={3} $bg="#f8e1d0" $b={2} />
            <Underbar $r={32} $c={col("H")} />
            {cells.map(([r, c, text, o]) => (
              <Label key={`${r}${c}`} $r={r} $c={col(c)} {...o}>{text}</Label>
            ))}
            <Selection $r={8} $c={col("L")} $cs={4}>Sample Text Number 2</Selection>
          </OverlayGrid>

          <CursorMark width="13" height="13" viewBox="0 0 13 13">
            <path d="M4.5 1h4v3.5H12v4H8.5V12h-4V8.5H1v-4h3.5z" fill="#fff" stroke="#333" strokeWidth="1.1" />
          </CursorMark>

          <Card>
            <CardNote>
              <span>This flight emits <b>19% less CO₂</b> than a typical flight on this route</span>
              <Info size={10} color="#fff" fill="#111" strokeWidth={2} />
            </CardNote>
            <CardBody>
              <Flights>
                {flights.map(f => (
                  <FlightRow key={f.dep}>
                    <Brand>Jetstar<Jet /></Brand>
                    <TimeBox $w={50} $ml={36} $align="right">
                      <Clock>{f.dep}</Clock><Airport>{f.from}</Airport>
                    </TimeBox>
                    <Route>
                      <RouteTop>{f.top}</RouteTop>
                      <RouteLine><Track $stop={f.stop} /><PlaneMark /></RouteLine>
                      <RouteBottom $c={f.stop ? "#666" : "#3f7f85"}>
                        {f.stop ? <><Stop>1 stop</Stop> SYD</> : "Direct"}
                      </RouteBottom>
                    </Route>
                    <TimeBox $w={50} $ml={7} $align="left">
                      <Clock>{f.arr}</Clock><Airport>{f.to}</Airport>
                    </TimeBox>
                  </FlightRow>
                ))}
              </Flights>
              <Deals>
                <DealsNote>14 deals from</DealsNote>
                <Price>$303</Price>
                <SelectButton>Select <ArrowRight size={11} strokeWidth={2.4} /></SelectButton>
              </Deals>
            </CardBody>
          </Card>
        </Sheet>

        <SheetTabs>
          <NavArrow $w={14}>◀</NavArrow>
          <NavArrow $w={21}>▶</NavArrow>
          <SheetTab>Sheet1</SheetTab>
          <AddSheet>+</AddSheet>
        </SheetTabs>
        <StatusBar>
          <StatusText>Ready</StatusText>
          <StatusGroup $ml={15}><Accessibility />Accessibility: Investigate</StatusGroup>
          <StatusRight>
            <ViewButton $w={30} $active><GridView /></ViewButton>
            <ViewButton $w={30}><PageView /></ViewButton>
            <ViewButton $w={26}><BreakView /></ViewButton>
            <ZoomMark $ml={6}>−</ZoomMark>
            <Slider><SliderKnob /></Slider>
            <ZoomMark $ml={4}>+</ZoomMark>
            <ZoomValue>100%</ZoomValue>
          </StatusRight>
        </StatusBar>
      </Window>
    </Stage>
  );
}
